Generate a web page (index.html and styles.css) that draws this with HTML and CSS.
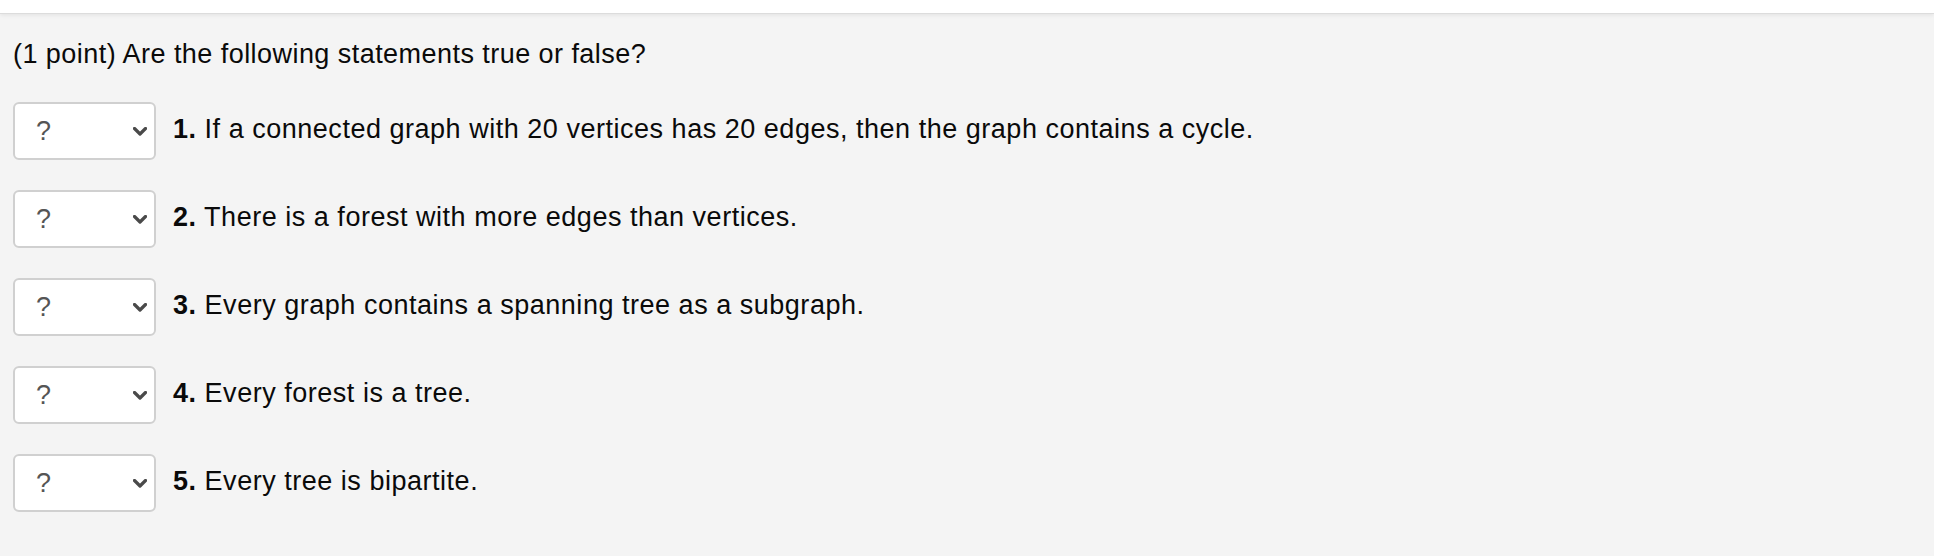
FILE: index.html
```html
<!DOCTYPE html>
<html>
<head>
<meta charset="utf-8">
<link rel="stylesheet" href="styles.css">
</head>
<body>
<div class="topbar"></div>
<main class="problem">
  <p class="intro">(1 point) Are the following statements true or false?</p>
  <div class="rows">
    <div class="row">
      <div class="select"><span class="val">?</span><svg class="chev" viewBox="0 0 14 9" width="14" height="9"><polyline points="1.5,1.5 7,7 12.5,1.5" fill="none" stroke="#4a4a4a" stroke-width="3.2" stroke-linecap="round" stroke-linejoin="round"/></svg></div>
      <div class="stmt"><b>1.</b> If a connected graph with 20 vertices has 20 edges, then the graph contains a cycle.</div>
    </div>
    <div class="row">
      <div class="select"><span class="val">?</span><svg class="chev" viewBox="0 0 14 9" width="14" height="9"><polyline points="1.5,1.5 7,7 12.5,1.5" fill="none" stroke="#4a4a4a" stroke-width="3.2" stroke-linecap="round" stroke-linejoin="round"/></svg></div>
      <div class="stmt"><b>2.</b> There is a forest with more edges than vertices.</div>
    </div>
    <div class="row">
      <div class="select"><span class="val">?</span><svg class="chev" viewBox="0 0 14 9" width="14" height="9"><polyline points="1.5,1.5 7,7 12.5,1.5" fill="none" stroke="#4a4a4a" stroke-width="3.2" stroke-linecap="round" stroke-linejoin="round"/></svg></div>
      <div class="stmt"><b>3.</b> Every graph contains a spanning tree as a subgraph.</div>
    </div>
    <div class="row">
      <div class="select"><span class="val">?</span><svg class="chev" viewBox="0 0 14 9" width="14" height="9"><polyline points="1.5,1.5 7,7 12.5,1.5" fill="none" stroke="#4a4a4a" stroke-width="3.2" stroke-linecap="round" stroke-linejoin="round"/></svg></div>
      <div class="stmt"><b>4.</b> Every forest is a tree.</div>
    </div>
    <div class="row">
      <div class="select"><span class="val">?</span><svg class="chev" viewBox="0 0 14 9" width="14" height="9"><polyline points="1.5,1.5 7,7 12.5,1.5" fill="none" stroke="#4a4a4a" stroke-width="3.2" stroke-linecap="round" stroke-linejoin="round"/></svg></div>
      <div class="stmt"><b>5.</b> Every tree is bipartite.</div>
    </div>
  </div>
</main>
</body>
</html>
```

FILE: styles.css
```css
html, body {
  margin: 0;
  padding: 0;
  background: #f4f4f4;
  height: 100%;
}
body {
  font-family: "Liberation Sans", Arial, sans-serif;
  color: #0a0a0a;
}
.topbar {
  height: 13px;
  background: #fff;
  border-bottom: 1px solid #dcdcdc;
  box-shadow: 0 1px 4px rgba(0,0,0,0.08);
  position: relative;
}
.problem {
  padding: 0 0 0 13px;
}
.intro {
  margin: 0;
  padding-top: 25px;
  font-size: 27px;
  line-height: 30px;
  letter-spacing: 0.45px;
}
.rows {
  display: flex;
  flex-direction: column;
  gap: 30px;
  margin-top: 33px;
}
.row {
  display: flex;
  align-items: center;
  gap: 17px;
}
.select {
  box-sizing: border-box;
  width: 143px;
  height: 58px;
  background: #fff;
  border: 2px solid #d0d0d0;
  border-radius: 6px;
  display: flex;
  align-items: center;
  justify-content: space-between;
  padding: 0 7px 0 21px;
}
.val {
  font-size: 27px;
  color: #555;
}
.chev {
  display: block;
}
.stmt {
  font-size: 27px;
  line-height: 30px;
  letter-spacing: 0.52px;
  margin-bottom: 4px;
}
.stmt b {
  font-weight: bold;
}
```
